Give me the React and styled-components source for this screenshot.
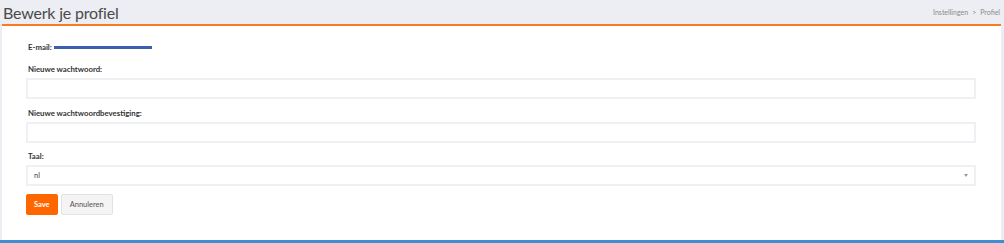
import React from "react";
import styled, { createGlobalStyle } from "styled-components";

const GlobalStyle = createGlobalStyle`
  html, body {
    margin: 0;
    padding: 0;
    background: #eceef3;
    font-family: "Lato", "Open Sans", sans-serif;
  }
`;

const Page = styled.div`
  width: 1004px;
  height: 243px;
  overflow: hidden;
  display: flex;
  flex-direction: column;
  background: #eceef3;
  border-bottom: 3px solid #3a8fd1;
  box-sizing: border-box;
`;

const Header = styled.div`
  display: flex;
  justify-content: space-between;
  align-items: center;
  height: 24px;
  padding: 0 4px 0 3px;
`;

const Title = styled.h1`
  margin: 0;
  font-size: 16px;
  font-weight: 400;
  color: #4a4a4a;
  letter-spacing: -0.2px;
`;

const Crumbs = styled.div`
  font-size: 7px;
  color: #8a8a8a;
  display: flex;
  gap: 4px;
`;

const Panel = styled.div`
  margin: 0 3px 0 2px;
  background: #fff;
  border-top: 2px solid #f97a22;
  padding: 16px 24px 0 24px;
  flex: 1;
`;

const Label = styled.div`
  font-size: 7.8px;
  line-height: 10px;
  font-weight: 700;
  color: #333;
  margin: ${(p) => p.$mt || 0}px 0 4px 2px;
  display: flex;
  align-items: center;
`;

const Redacted = styled.span`
  display: inline-block;
  width: 98px;
  height: 3px;
  background: #3c5fb4;
  margin-left: 2px;
`;

const Input = styled.div`
  height: 17px;
  border: 2px solid #eef0f4;
  background: #fff;
  width: 934px;
  display: flex;
  align-items: center;
  justify-content: space-between;
  padding: 0 6px;
  box-sizing: content-box;
  font-size: 7.5px;
  color: #444;
`;

const Caret = styled.span`
  width: 0;
  height: 0;
  border-left: 2.5px solid transparent;
  border-right: 2.5px solid transparent;
  border-top: 3px solid #999;
`;

const Buttons = styled.div`
  display: flex;
  gap: 3px;
  margin-top: 8px;
`;

const Button = styled.button`
  height: 21px;
  font-family: inherit;
  font-size: 7.5px;
  padding: 0 ${(p) => (p.$primary ? 7 : 8)}px;
  border: 1px solid ${(p) => (p.$primary ? "#ff6600" : "#e2e2e2")};
  background: ${(p) => (p.$primary ? "#ff6600" : "#f4f4f4")};
  color: ${(p) => (p.$primary ? "#fff" : "#555")};
  font-weight: ${(p) => (p.$primary ? 700 : 400)};
  border-radius: 2px;
`;

export default function App() {
  return (
    <Page>
      <GlobalStyle />
      <Header>
        <Title>Bewerk je profiel</Title>
        <Crumbs>
          <span>Instellingen</span>
          <span>&gt;</span>
          <span>Profiel</span>
        </Crumbs>
      </Header>
      <Panel>
        <Label>
          E-mail: <Redacted />
        </Label>
        <Label $mt={12}>Nieuwe wachtwoord:</Label>
        <Input />
        <Label $mt={9}>Nieuwe wachtwoordbevestiging:</Label>
        <Input />
        <Label $mt={8}>Taal:</Label>
        <Input>
          <span>nl</span>
          <Caret />
        </Input>
        <Buttons>
          <Button $primary>Save</Button>
          <Button>Annuleren</Button>
        </Buttons>
      </Panel>
    </Page>
  );
}
